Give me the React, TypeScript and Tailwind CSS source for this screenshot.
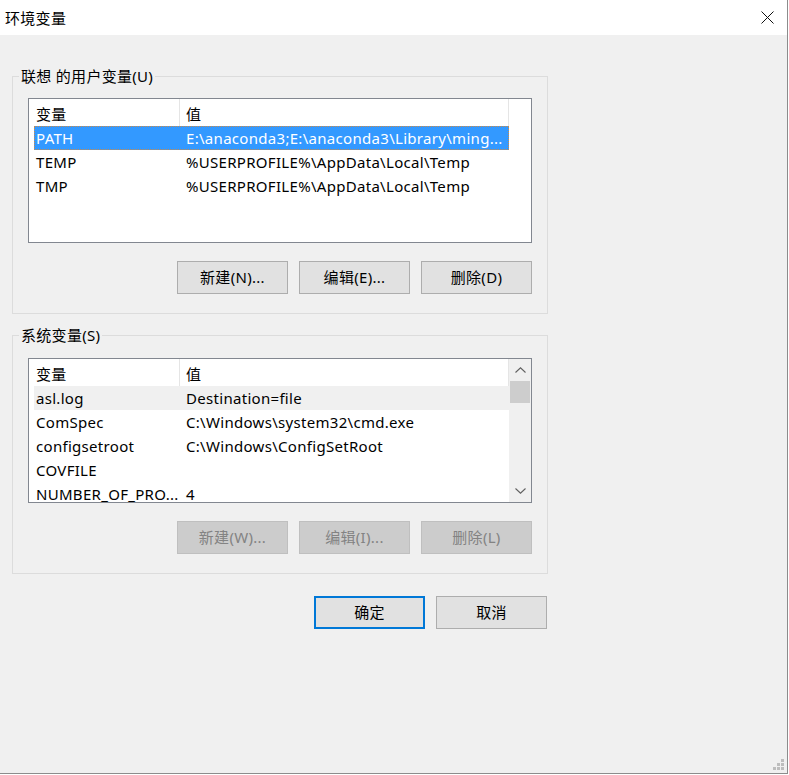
import React from "react";

type Variant = "sel" | "gray" | "none";

function Header() {
  return (
    <div className="flex h-[27px] shrink-0">
      <div className="w-[151px] h-full border-r border-[#e5e5e5] pl-[7px] flex items-center pt-[2px]">变量</div>
      <div className="w-[329px] h-full border-r border-[#e5e5e5] pl-[6px] flex items-center pt-[2px]">值</div>
    </div>
  );
}

function Row({ name, value, variant = "none" }: { name: string; value: string; variant?: Variant }) {
  const cls =
    variant === "sel"
      ? "bg-[#3399ff] text-white outline outline-1 outline-dotted outline-offset-[-1px] outline-[#c98a4a]"
      : variant === "gray"
      ? "bg-[#f0f0f0]"
      : "";
  return (
    <div className={`ml-[5px] flex h-[24px] w-[475px] shrink-0 items-center ${cls}`}>
      <div className="w-[146px] pl-[2px] whitespace-nowrap overflow-hidden">{name}</div>
      <div className="flex-1 pl-[6px] whitespace-nowrap overflow-hidden">{value}</div>
    </div>
  );
}

function Chevron({ up }: { up?: boolean }) {
  return (
    <svg width="11" height="6" viewBox="0 0 11 6" className="block">
      <path
        d={up ? "M0.5 5.5 L5.5 0.8 L10.5 5.5" : "M0.5 0.5 L5.5 5.2 L10.5 0.5"}
        fill="none"
        stroke="#606060"
        strokeWidth="1.1"
      />
    </svg>
  );
}

function Scrollbar() {
  return (
    <div className="w-[22px] h-full bg-[#f0f0f0] flex flex-col shrink-0">
      <div className="h-[22px] flex items-center justify-center">
        <Chevron up />
      </div>
      <div className="h-[22px] mx-[1px] bg-[#cdcdcd]" />
      <div className="flex-1" />
      <div className="h-[22px] flex items-center justify-center">
        <Chevron />
      </div>
    </div>
  );
}

function Btn({ label, disabled, primary }: { label: string; disabled?: boolean; primary?: boolean }) {
  const cls = disabled
    ? "bg-[#cccccc] border border-[#bfbfbf] text-[#838383]"
    : primary
    ? "bg-[#e1e1e1] border-2 border-[#0078d7] text-black"
    : "bg-[#e1e1e1] border border-[#adadad] text-black";
  return (
    <div className={`w-[111px] h-[33px] flex items-center justify-center pb-[2px] ${cls}`}>{label}</div>
  );
}

function Group({ legend, children, h, pt }: { legend: string; children: React.ReactNode; h: string; pt: string }) {
  return (
    <div className={`relative w-[536px] border border-[#dcdcdc] px-[15px] ${h} ${pt}`}>
      <div className="absolute left-[6px] top-[-11px] px-[2px] bg-[#f0f0f0] leading-[20px] whitespace-nowrap">
        {legend}
      </div>
      {children}
    </div>
  );
}

export default function App() {
  return (
    <div className="w-[789px] h-[775px] bg-white font-['Noto_Sans','Noto_Sans_CJK_SC',sans-serif] text-[15px] tracking-[0.3px] text-black leading-[20px]">
      <div className="relative w-[788px] h-[774px] border-r border-b border-[#8c8c8c] bg-[#f0f0f0] flex flex-col">
        {/* title bar */}
        <div className="h-[35px] bg-white flex items-center justify-between pl-[5px] pr-[13px] shrink-0">
          <span>环境变量</span>
          <svg width="13" height="13" viewBox="0 0 13 13" className="block">
            <path d="M0.5 0.5 L12.5 12.5 M12.5 0.5 L0.5 12.5" stroke="#111" strokeWidth="1" fill="none" />
          </svg>
        </div>

        {/* body */}
        <div className="pl-[12px] pt-[41px] flex flex-col">
          <Group legend="联想 的用户变量(U)" h="h-[238px]" pt="pt-[21px]">
            <div className="h-[145px] w-[504px] border border-[#828790] bg-white flex overflow-hidden">
              <div className="w-[480px] flex flex-col overflow-hidden">
                <Header />
                <Row name="PATH" value="E:\anaconda3;E:\anaconda3\Library\ming..." variant="sel" />
                <Row name="TEMP" value="%USERPROFILE%\AppData\Local\Temp" />
                <Row name="TMP" value="%USERPROFILE%\AppData\Local\Temp" />
              </div>
            </div>
            <div className="mt-[18px] flex justify-end gap-[11px] w-[504px]">
              <Btn label="新建(N)..." />
              <Btn label="编辑(E)..." />
              <Btn label="删除(D)" />
            </div>
          </Group>

          <div className="mt-[21px]">
            <Group legend="系统变量(S)" h="h-[239px]" pt="pt-[22px]">
              <div className="h-[145px] w-[504px] border border-[#828790] bg-white flex overflow-hidden">
                <div className="w-[480px] flex flex-col overflow-hidden">
                  <Header />
                  <Row name="asl.log" value="Destination=file" variant="gray" />
                  <Row name="ComSpec" value="C:\Windows\system32\cmd.exe" />
                  <Row name="configsetroot" value="C:\Windows\ConfigSetRoot" />
                  <Row name="COVFILE" value="" />
                  <Row name="NUMBER_OF_PRO..." value="4" />
                </div>
                <Scrollbar />
              </div>
              <div className="mt-[18px] flex justify-end gap-[11px] w-[504px]">
                <Btn label="新建(W)..." disabled />
                <Btn label="编辑(I)..." disabled />
                <Btn label="删除(L)" disabled />
              </div>
            </Group>
          </div>

          <div className="mt-[22px] w-[535px] flex justify-end gap-[11px]">
            <Btn label="确定" primary />
            <Btn label="取消" />
          </div>
        </div>

        {/* resize grip */}
        <svg width="12" height="12" viewBox="0 0 12 12" className="absolute right-[2px] bottom-[2px]">
          <rect x="0" y="8" width="3" height="3" fill="#bdbdbd" />
          <rect x="4" y="8" width="3" height="3" fill="#bdbdbd" />
          <rect x="8" y="8" width="3" height="3" fill="#bdbdbd" />
          <rect x="4" y="4" width="3" height="3" fill="#bdbdbd" />
          <rect x="8" y="4" width="3" height="3" fill="#bdbdbd" />
          <rect x="8" y="0" width="3" height="3" fill="#bdbdbd" />
        </svg>
      </div>
    </div>
  );
}
